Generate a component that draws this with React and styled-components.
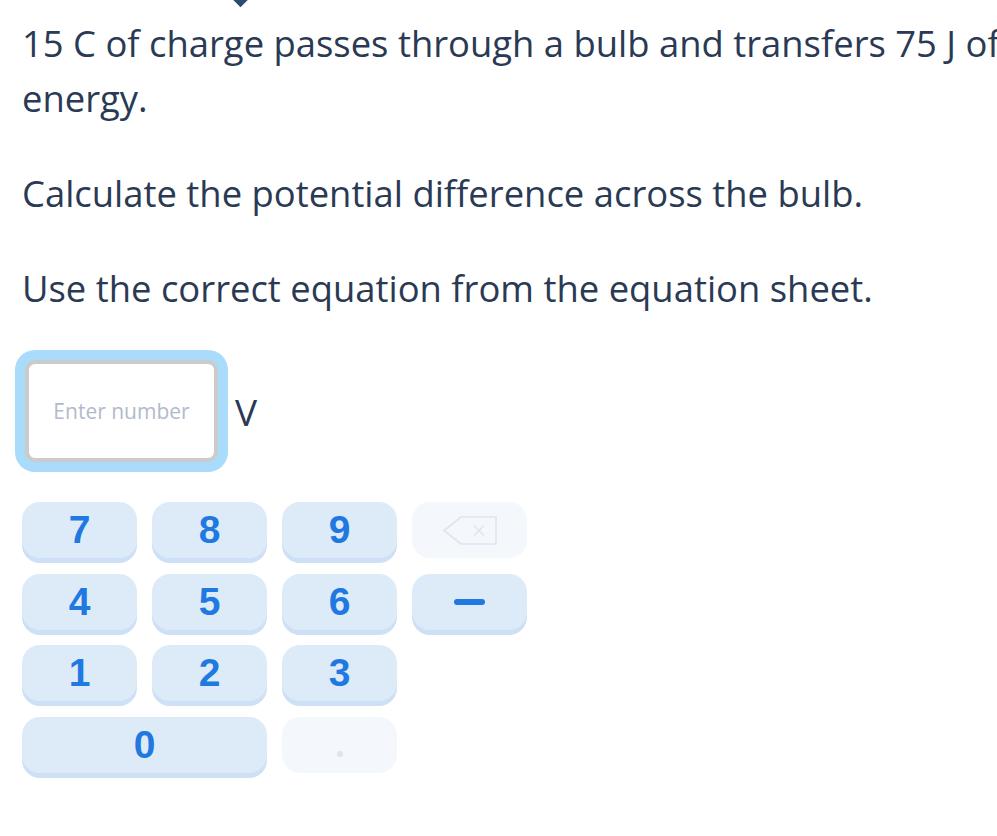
import React from "react";
import styled, { createGlobalStyle } from "styled-components";

const Global = createGlobalStyle`
  html, body { margin: 0; padding: 0; background: #ffffff; overflow: hidden; }
  body { font-family: "Open Sans", "Noto Sans", sans-serif; }
  * { box-sizing: border-box; }
`;

const Page = styled.div`
  position: relative;
  width: 997px;
  height: 836px;
  overflow: hidden;
  padding: 16px 0 0 22px;
`;

const Pointer = styled.div`
  position: absolute;
  top: -6px;
  left: 235px;
  width: 11px;
  height: 11px;
  background: #2d4a72;
  transform: rotate(45deg);
`;

const Question = styled.p`
  margin: 0 0 40px 0;
  width: ${(p) => p.$width || "960px"};
  font-size: 36.4px;
  line-height: 55px;
  color: #2a3a54;
  font-weight: 400;
`;

const AnswerRow = styled.div`
  display: flex;
  align-items: center;
  gap: 7px;
  margin: -6px 0 30px -7px;
`;

const Ring = styled.div`
  padding: 10px;
  border-radius: 20px;
  background: #a9dcfb;
`;

const Field = styled.div`
  width: 193px;
  height: 102px;
  border: 4px solid #cbcbcb;
  border-radius: 10px;
  background: #ffffff;
  display: flex;
  align-items: center;
  justify-content: center;
  font-family: "Open Sans", sans-serif;
  font-size: 21px;
  color: #b1bacb;
`;

const Unit = styled.span`
  font-size: 37px;
  color: #2a3a54;
  line-height: 1;
`;

const Pad = styled.div`
  display: grid;
  grid-template-columns: repeat(4, 115px);
  grid-auto-rows: 61px;
  column-gap: 15px;
  row-gap: 10.5px;
`;

const Key = styled.div`
  height: 56px;
  border-radius: 18px;
  background: ${(p) => (p.$disabled ? "#f4f8fd" : "#ddebf8")};
  box-shadow: ${(p) => (p.$disabled ? "none" : "0 5px 0 #cde0f6")};
  grid-column: ${(p) => (p.$wide ? "span 2" : "auto")};
  display: flex;
  align-items: center;
  justify-content: center;
  font-family: "Liberation Sans", Arial, sans-serif;
  font-weight: 700;
  font-size: 39px;
  color: #1f79e0;
`;

const Dash = styled.span`
  width: 31px;
  height: 6px;
  border-radius: 3px;
  background: #1f79e0;
`;

const Dot = styled.span`
  width: 6px;
  height: 6px;
  border-radius: 50%;
  background: #dfe3ea;
  margin-top: 18px;
`;

const Blank = styled.div``;

const BackspaceIcon = () => (
  <svg width="56" height="29" viewBox="0 0 56 29" fill="none">
    <path
      d="M19 1 H54 V28 H19 L2 14.5 Z"
      stroke="#e1e5eb"
      strokeWidth="1.6"
      strokeLinejoin="miter"
    />
    <path d="M32 9.5 L42 19.5 M42 9.5 L32 19.5" stroke="#e1e5eb" strokeWidth="1.6" />
  </svg>
);

export default function App() {
  return (
    <>
      <Global />
      <Page>
        <Pointer />
        <Question $width="1010px">
          15 C of charge passes through a bulb and transfers 75 J of energy.
        </Question>
        <Question>Calculate the potential difference across the bulb.</Question>
        <Question>Use the correct equation from the equation sheet.</Question>
        <AnswerRow>
          <Ring>
            <Field>Enter number</Field>
          </Ring>
          <Unit>V</Unit>
        </AnswerRow>
        <Pad>
          <Key>7</Key>
          <Key>8</Key>
          <Key>9</Key>
          <Key $disabled>
            <BackspaceIcon />
          </Key>
          <Key>4</Key>
          <Key>5</Key>
          <Key>6</Key>
          <Key>
            <Dash />
          </Key>
          <Key>1</Key>
          <Key>2</Key>
          <Key>3</Key>
          <Blank />
          <Key $wide>0</Key>
          <Key $disabled>
            <Dot />
          </Key>
        </Pad>
      </Page>
    </>
  );
}
